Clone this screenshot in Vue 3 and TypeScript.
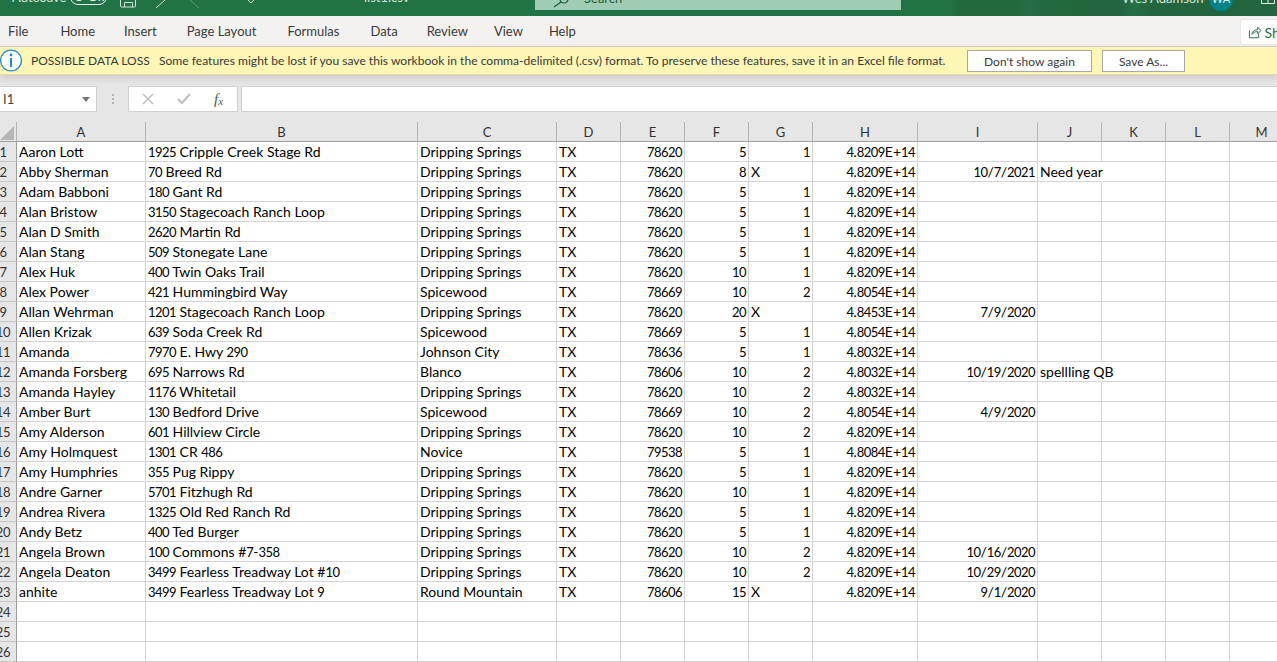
<script setup lang="ts">
const tabs = ['File', 'Home', 'Insert', 'Page Layout', 'Formulas', 'Data', 'Review', 'View', 'Help']
const cols = ['A', 'B', 'C', 'D', 'E', 'F', 'G', 'H', 'I', 'J', 'K', 'L', 'M']
const DS = 'Dripping Springs'
const raw: string[][] = [
  ['Aaron Lott', '1925 Cripple Creek Stage Rd', DS, '78620', '5', '1', '4.8209E+14', '', ''],
  ['Abby Sherman', '70 Breed Rd', DS, '78620', '8', 'X', '4.8209E+14', '10/7/2021', 'Need year'],
  ['Adam Babboni', '180 Gant Rd', DS, '78620', '5', '1', '4.8209E+14', '', ''],
  ['Alan Bristow', '3150 Stagecoach Ranch Loop', DS, '78620', '5', '1', '4.8209E+14', '', ''],
  ['Alan D Smith', '2620 Martin Rd', DS, '78620', '5', '1', '4.8209E+14', '', ''],
  ['Alan Stang', '509 Stonegate Lane', DS, '78620', '5', '1', '4.8209E+14', '', ''],
  ['Alex Huk', '400 Twin Oaks Trail', DS, '78620', '10', '1', '4.8209E+14', '', ''],
  ['Alex Power', '421 Hummingbird Way', 'Spicewood', '78669', '10', '2', '4.8054E+14', '', ''],
  ['Allan Wehrman', '1201 Stagecoach Ranch Loop', DS, '78620', '20', 'X', '4.8453E+14', '7/9/2020', ''],
  ['Allen Krizak', '639 Soda Creek Rd', 'Spicewood', '78669', '5', '1', '4.8054E+14', '', ''],
  ['Amanda', '7970 E. Hwy 290', 'Johnson City', '78636', '5', '1', '4.8032E+14', '', ''],
  ['Amanda Forsberg', '695 Narrows Rd', 'Blanco', '78606', '10', '2', '4.8032E+14', '10/19/2020', 'spellling QB'],
  ['Amanda Hayley', '1176 Whitetail', DS, '78620', '10', '2', '4.8032E+14', '', ''],
  ['Amber Burt', '130 Bedford Drive', 'Spicewood', '78669', '10', '2', '4.8054E+14', '4/9/2020', ''],
  ['Amy Alderson', '601 Hillview Circle', DS, '78620', '10', '2', '4.8209E+14', '', ''],
  ['Amy Holmquest', '1301 CR 486', 'Novice', '79538', '5', '1', '4.8084E+14', '', ''],
  ['Amy Humphries', '355 Pug Rippy', DS, '78620', '5', '1', '4.8209E+14', '', ''],
  ['Andre Garner', '5701 Fitzhugh Rd', DS, '78620', '10', '1', '4.8209E+14', '', ''],
  ['Andrea Rivera', '1325 Old Red Ranch Rd', DS, '78620', '5', '1', '4.8209E+14', '', ''],
  ['Andy Betz', '400 Ted Burger', DS, '78620', '5', '1', '4.8209E+14', '', ''],
  ['Angela Brown', '100 Commons #7-358', DS, '78620', '10', '2', '4.8209E+14', '10/16/2020', ''],
  ['Angela Deaton', '3499 Fearless Treadway Lot #10', DS, '78620', '10', '2', '4.8209E+14', '10/29/2020', ''],
  ['anhite', '3499 Fearless Treadway Lot 9', 'Round Mountain', '78606', '15', 'X', '4.8209E+14', '9/1/2020', ''],
]

type Part = { text: string; digits: boolean }
type Cell = { parts: Part[]; cls: string }

// Lato's digits are wider than the sheet's, so runs of digits get a tighter style.
function split(text: string): Part[] {
  return text
    .split(/(\d+)/)
    .filter((s) => s !== '')
    .map((s) => ({ text: s, digits: /^\d/.test(s) }))
}
function cell(text: string, cls = ''): Cell {
  return { parts: split(text), cls }
}

const rows: Cell[][] = Array.from({ length: 26 }, (_, i) => {
  const r = raw[i]
  if (!r) return cols.map(() => cell(''))
  const note = r[8]
  return [
    cell(r[0]),
    cell(r[1]),
    cell(r[2]),
    cell('TX'),
    cell(r[3], 'num'),
    cell(r[4], 'num'),
    cell(r[5], r[5] === 'X' ? 'mark' : 'num'),
    cell(r[6], 'num'),
    cell(r[7], 'num'),
    cell(note, note ? 'spill' : ''),
    cell(''),
    cell(''),
    cell(''),
  ]
})
</script>

<template>
  <div class="app">
    <header class="title">
      <div class="title-left">
        <span class="autosave">AutoSave</span>
        <span class="toggle"><i class="knob"></i>Off</span>
        <svg class="save" width="17" height="8" viewBox="0 0 17 8" fill="none" stroke="#cfe3d8" stroke-width="1">
          <path d="M.5 0v6a1 1 0 0 0 1 1h13a1 1 0 0 0 1-1V0" />
          <path d="M4.500 7V2.500h8V7" />
        </svg>
        <svg class="arrows" width="45" height="9" viewBox="0 0 45 9" fill="none">
          <path d="M0 8 9 0" stroke="#cfe3d8" />
          <path d="M34 0 43 8" stroke="#5d9c7b" />
        </svg>
        <svg class="caret" width="8" height="4" viewBox="0 0 8 4" fill="none" stroke="#cfe3d8"><path d="M1 0l3 3 3-3" /></svg>
      </div>
      <span class="filename">list1.csv</span>
      <div class="search">
        <svg class="glass" width="16" height="8" viewBox="0 0 16 8" fill="none" stroke="#1d5c39" stroke-width="1.200"><circle cx="11" cy="-1" r="4" /><path d="M8 2 1 7" /></svg>
        <span>Search</span>
      </div>
      <div class="title-right">
        <span class="user">Wes Adamson</span>
        <span class="avatar">WA</span>
        <svg class="ribbon-opt" width="14" height="4" viewBox="0 0 14 4" fill="none" stroke="#e0ece5"><path d="M.5 0v3.500h13V0M7 0v3.500" /></svg>
      </div>
    </header>

    <nav class="tabs">
      <span v-for="t in tabs" :key="t" class="tab">{{ t }}</span>
      <div class="share">
        <svg width="14" height="14" viewBox="0 0 14 14" fill="none" stroke="#217346">
          <path d="M1.500 5.500v7.500h9.500V9" />
          <path d="M4 9.500c.4-3 2.600-4.800 6-5V2l3.300 3.500L10 9V6.600C7.500 6.500 5.500 7.500 4 9.500Z" />
        </svg>
        <span>Share</span>
      </div>
    </nav>

    <section class="notice">
      <svg class="info" width="23" height="23" viewBox="0 0 23 23">
        <circle cx="11" cy="11.500" r="10.400" fill="#fff" stroke="#2b8bd0" stroke-width="1.300" />
        <circle cx="11" cy="6" r="1.400" fill="#1e88d2" />
        <rect x="10" y="9" width="2" height="9" fill="#1e88d2" />
      </svg>
      <strong>POSSIBLE DATA LOSS</strong>
      <span class="msg">Some features might be lost if you save this workbook in the comma-delimited (.csv) format. To preserve these features, save it in an Excel file format.</span>
      <button class="btn b1">Don't show again</button>
      <button class="btn b2">Save As...</button>
    </section>

    <section class="formula">
      <div class="namebox"><span>I1</span><i class="down"></i></div>
      <span class="dots"><i></i><i></i><i></i></span>
      <div class="fx-tools">
        <svg width="12" height="12" viewBox="0 0 12 12" fill="none" stroke="#bdbdbd" stroke-width="1.500"><path d="M1 1l10 10M11 1 1 11" /></svg>
        <svg width="14" height="12" viewBox="0 0 14 12" fill="none" stroke="#bdbdbd" stroke-width="2"><path d="M1 6l4 4 8-9" /></svg>
        <span class="fx">f<sub>x</sub></span>
      </div>
      <div class="fbar"></div>
    </section>

    <section class="sheet">
      <div class="grid">
        <div class="corner"><i></i></div>
        <div v-for="c in cols" :key="c" class="colhead">{{ c }}</div>
        <template v-for="(row, i) in rows" :key="i">
          <div class="rowhead">{{ i + 1 }}</div>
          <div v-for="(c, j) in row" :key="j" class="cell" :class="c.cls"><span v-for="(p, k) in c.parts" :key="k" :class="{ dg: p.digits }">{{ p.text }}</span></div>
        </template>
      </div>
    </section>
  </div>
</template>

<style>
html, body { margin: 0; padding: 0; overflow: hidden; background: #fff; }
</style>

<style scoped>
.app {
  width: 1277px;
  height: 662px;
  overflow: hidden;
  display: flex;
  flex-direction: column;
  font-family: "Lato", "Open Sans", sans-serif;
  background: #e6e6e6;
}
.title {
  height: 16px;
  flex: none;
  position: relative;
  overflow: hidden;
  display: flex;
  align-items: flex-end;
  background: linear-gradient(90deg, #217346 0, #217346 950px, #22683f 958px, #22683f 1015px, #256f47 1030px, #22683f 1042px, #23653f 1120px, #257047 1135px, #23653f 1150px, #23653f 1277px);
  color: #d4e6dc;
  font-size: 13px;
}
.title-left { display: flex; align-items: flex-start; height: 16px; padding-left: 12px; }
.autosave { margin-top: -12px; line-height: 18px; width: 58px; }
.toggle {
  margin-top: -11px;
  width: 37px;
  height: 16px;
  box-sizing: border-box;
  border: 1px solid #f2f2f2;
  border-radius: 9px;
  font-size: 12px;
  line-height: 14px;
  padding-left: 17px;
  position: relative;
  color: #fff;
}
.knob { position: absolute; left: 4px; top: 3px; width: 8px; height: 8px; border-radius: 50%; background: #fff; }
.save { margin: 0 0 0 13px; }
.arrows { margin: 0 0 0 19px; }
.caret { margin: 0 0 0 46px; }
.filename { position: absolute; left: 364px; top: -12px; line-height: 18px; }
.search {
  position: absolute;
  left: 535px;
  top: 0;
  width: 366px;
  height: 10px;
  background: #a0ccb3;
  color: #1d5c39;
  overflow: hidden;
}
.search span { position: absolute; left: 49px; top: -11px; line-height: 18px; }
.glass { position: absolute; left: 18px; top: 0; }
.title-right { position: absolute; right: 0; top: 0; height: 16px; width: 155px; }
.user { position: absolute; left: 0; top: -11px; line-height: 18px; white-space: nowrap; }
.avatar {
  position: absolute;
  left: 87px;
  top: -13px;
  width: 24px;
  height: 24px;
  border-radius: 50%;
  background: #038387;
  color: #d8eeee;
  font-size: 11px;
  text-align: center;
  line-height: 24px;
}
.ribbon-opt { position: absolute; left: 139px; top: 0; }
.tabs {
  height: 31px;
  flex: none;
  box-sizing: border-box;
  background: #f3f2f1;
  border-bottom: 1px solid #d2d0ce;
  display: flex;
  align-items: center;
  position: relative;
  font-size: 13px;
  color: #3a3a3a;
  padding-left: 8px;
}
.tab { margin-right: 30px; white-space: nowrap; }
.tab:nth-child(1) { margin-right: 32px; }
.tab:nth-child(2) { margin-right: 29px; }
.tab:nth-child(4) { margin-right: 31px; }
.tab:nth-child(5) { margin-right: 31px; }
.tab:nth-child(6) { margin-right: 29px; }
.tab:nth-child(7) { margin-right: 26px; }
.tab:nth-child(8) { margin-right: 26px; }
.share {
  position: absolute;
  left: 1240px;
  top: 3px;
  width: 60px;
  height: 26px;
  box-sizing: border-box;
  background: #fff;
  border: 1px solid #e6e6e6;
  border-radius: 3px;
  display: flex;
  align-items: center;
  gap: 3px;
  padding-left: 7px;
  color: #217346;
  font-size: 14px;
}
.notice {
  height: 28px;
  flex: none;
  box-sizing: border-box;
  background: #fdf6b4;
  display: flex;
  align-items: center;
  position: relative;
  z-index: 1;
  font-size: 12px;
  color: #3a3a3a;
  white-space: nowrap;
  box-shadow: 0 3px 7px rgba(0, 0, 0, .13);
  border-bottom: 1px solid #e4dda0;
}
.info { flex: none; }
.notice strong { font-weight: 400; margin-left: 8px; width: 128px; }
.msg { font-size: 12.080px; }
.btn {
  position: absolute;
  top: 3px;
  height: 22px;
  box-sizing: border-box;
  background: #fff;
  border: 1px solid #a8a8a8;
  font: inherit;
  font-size: 12px;
  color: #3a3a3a;
  padding: 0;
}
.b1 { left: 967px; width: 125px; }
.b2 { left: 1102px; width: 83px; }
.formula {
  height: 47px;
  flex: none;
  box-sizing: border-box;
  padding-top: 11px;
  display: flex;
  align-items: flex-start;
  background: #e6e6e6;
}
.namebox {
  width: 97px;
  height: 26px;
  box-sizing: border-box;
  background: #fff;
  border: 1px solid #d0d0d0;
  border-left: 0;
  display: flex;
  align-items: center;
  justify-content: space-between;
  padding: 0 6px 0 3px;
  font-size: 13px;
  color: #444;
}
.down { width: 0; height: 0; border: 4px solid transparent; border-top: 5px solid #777; border-bottom: 0; }
.dots {
  width: 31px;
  height: 26px;
  display: flex;
  flex-direction: column;
  align-items: center;
  justify-content: center;
  gap: 2px;
}
.dots i { width: 2px; height: 2px; background: #b5b5b5; }
.fx-tools {
  width: 110px;
  height: 26px;
  box-sizing: border-box;
  background: #fff;
  border: 1px solid #d0d0d0;
  display: flex;
  align-items: center;
  gap: 23px;
  padding-left: 13px;
}
.fx { font: italic 15px "Liberation Serif", serif; color: #555; }
.fx sub { font-size: 11px; vertical-align: -1px; line-height: 0; }
.fbar {
  margin-left: 3px;
  flex: 1;
  height: 26px;
  box-sizing: border-box;
  background: #fff;
  border: 1px solid #d0d0d0;
  border-right: 0;
}
.sheet {
  flex: 1;
  min-height: 0;
  margin-left: -10px;
  background: #fff;
  overflow: hidden;
}
.grid {
  display: grid;
  grid-template-columns: 27px 129px 272px 139px 64px 64px 64px 64px 105px 120px 64px 64px 64px 64px;
  grid-auto-rows: 20px;
  font-size: 14px;
  color: #000;
}
.corner {
  background: #e6e6e6;
  border-right: 1px solid #b5b5b5;
  border-bottom: 1px solid #9e9e9e;
  position: relative;
  box-sizing: border-box;
}
.corner i {
  position: absolute;
  right: 2px;
  bottom: 1px;
  width: 0;
  height: 0;
  border-left: 14px solid transparent;
  border-bottom: 14px solid #b6b6b6;
}
.colhead {
  background: #e6e6e6;
  border-right: 1px solid #b5b5b5;
  border-bottom: 1px solid #9e9e9e;
  box-sizing: border-box;
  text-align: center;
  line-height: 20px;
  font-size: 13px;
  color: #333;
}
.rowhead {
  background: #e6e6e6;
  border-right: 1px solid #9e9e9e;
  border-bottom: 1px solid #c6c6c6;
  box-sizing: border-box;
  text-align: center;
  line-height: 20px;
  font-size: 13px;
  letter-spacing: -.3px;
  color: #333;
}
.cell {
  box-sizing: border-box;
  border-right: 1px solid #d4d4d4;
  border-bottom: 1px solid #d4d4d4;
  padding: 0 2px;
  line-height: 20px;
  white-space: nowrap;
  overflow: hidden;
}
.dg { font-size: 13px; letter-spacing: -.55px; }
.num { text-align: right; }
.spill { overflow: visible; border-right-color: transparent; }
</style>
